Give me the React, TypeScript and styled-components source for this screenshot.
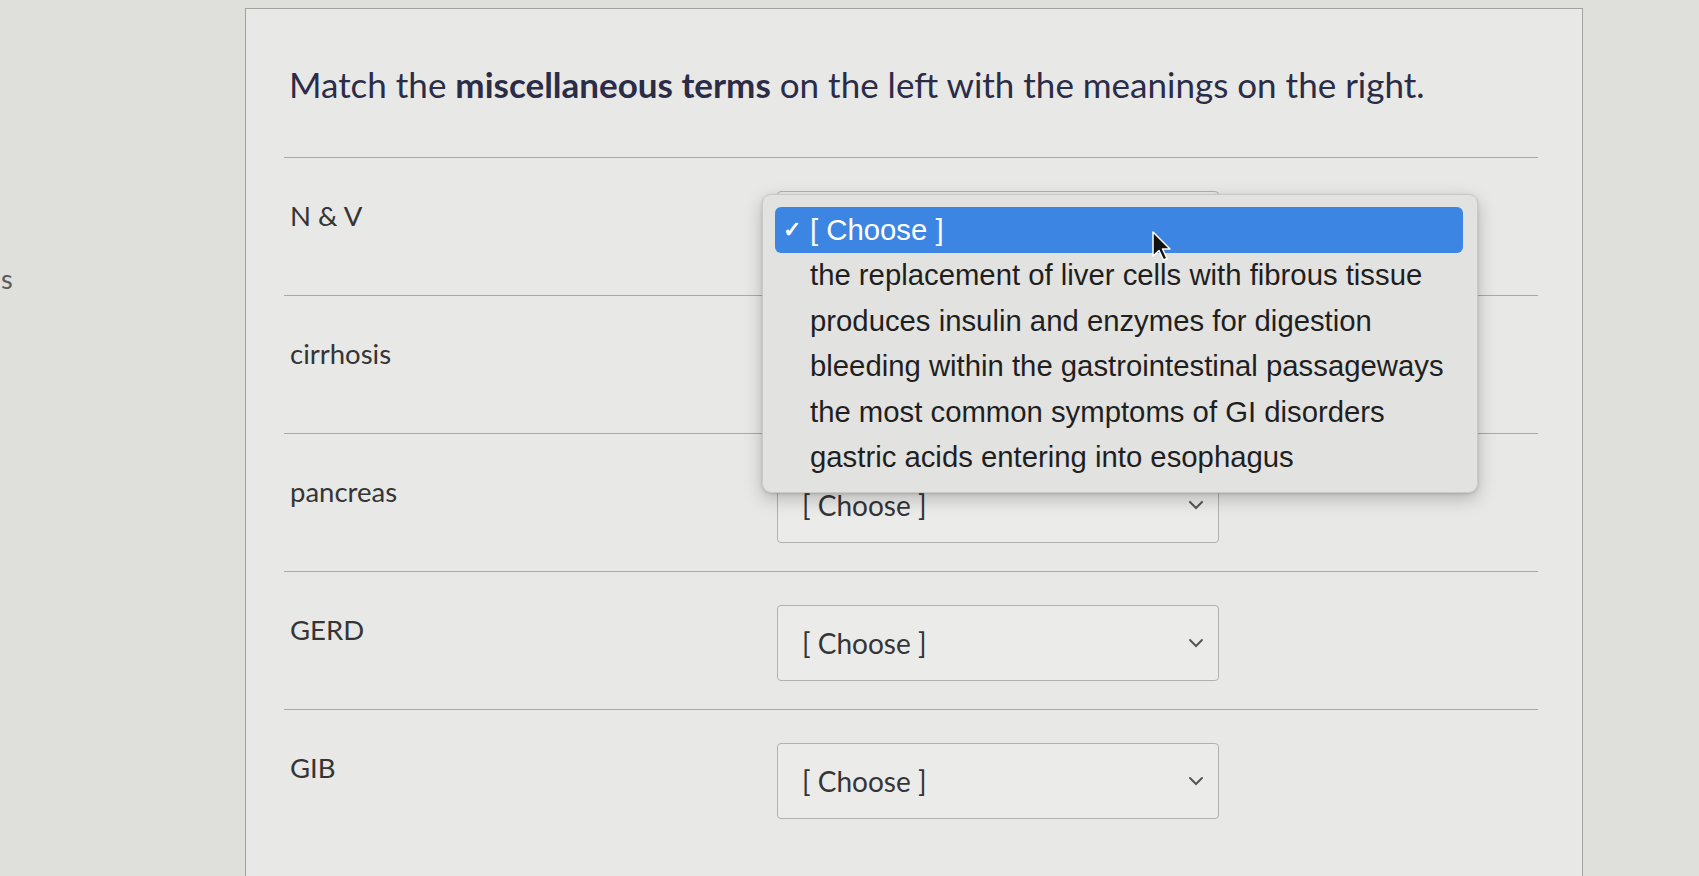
import React from "react";
import styled, { createGlobalStyle } from "styled-components";

const terms = ["N & V", "cirrhosis", "pancreas", "GERD", "GIB"];

const meanings = [
    "the replacement of liver cells with fibrous tissue",
    "produces insulin and enzymes for digestion",
    "bleeding within the gastrointestinal passageways",
    "the most common symptoms of GI disorders",
    "gastric acids entering into esophagus"
];

const GlobalStyle = createGlobalStyle`
    html, body {
        margin: 0;
        padding: 0;
    }
    body {
        width: 1699px;
        height: 876px;
        overflow: hidden;
        background: #dfdfdc;
        font-family: Lato, "Noto Sans", sans-serif;
    }
`;

const Page = styled.div`
    width: 1699px;
    height: 876px;
    display: flex;
    overflow: hidden;
`;

const Gutter = styled.aside<{ $width: number }>`
    width: ${(p) => p.$width}px;
    flex-shrink: 0;
    background: #dfdfdc;
`;

const SideLetter = styled.span`
    display: block;
    padding: 262px 0 0 1px;
    font-size: 27px;
    color: #5a5a5a;
`;

const Card = styled.main`
    position: relative;
    width: 1336px;
    flex-shrink: 0;
    margin-top: 8px;
    background: #e8e8e6;
    border: 1.5px solid #a2a2a0;
    border-bottom: none;
`;

const Title = styled.h1`
    margin: 54px 0 0 43px;
    font-size: 35px;
    line-height: 42px;
    font-weight: 400;
    color: #2b2c48;
    white-space: nowrap;
`;

const Strong = styled.b`
    font-weight: 700;
`;

const List = styled.div`
    margin: 52px 44px 0 38px;
`;

const Row = styled.div`
    height: 138px;
    box-sizing: border-box;
    border-top: 1.5px solid #a9a9a7;
    padding: 33px 0 0 6px;
    display: grid;
    grid-template-columns: 487px 442px;
    align-items: start;
`;

const Term = styled.span`
    margin-top: 9px;
    font-size: 27.5px;
    line-height: 31px;
    color: #353535;
`;

const SelectBox = styled.div`
    height: 76px;
    box-sizing: border-box;
    border: 1.5px solid #b1b1af;
    border-radius: 4px;
    background: #ebebe9;
    padding: 0 14px 0 24px;
    display: flex;
    align-items: center;
    justify-content: space-between;
    font-size: 28px;
    color: #353535;
`;

const Menu = styled.div`
    position: absolute;
    left: 516px;
    top: 185px;
    width: 716px;
    box-sizing: border-box;
    padding: 12px 14px 12px 12px;
    background: #e2e2e0;
    border: 1px solid #c9c9c7;
    border-radius: 9px;
    box-shadow: 0 6px 18px rgba(0, 0, 0, 0.22), 0 1px 3px rgba(0, 0, 0, 0.15);
    font-family: "Liberation Sans", Arial, sans-serif;
`;

const Option = styled.div<{ $active?: boolean }>`
    height: 45.5px;
    display: flex;
    align-items: center;
    border-radius: 6px;
    padding-left: ${(p) => (p.$active ? 8 : 35)}px;
    background: ${(p) => (p.$active ? "#3c85e2" : "transparent")};
    color: ${(p) => (p.$active ? "#ffffff" : "#1f1f1f")};
    font-size: 29.3px;
    white-space: nowrap;
`;

const Check = styled.span`
    width: 27px;
    font-size: 22px;
    font-weight: 700;
`;

const Pointer = styled.svg`
    position: absolute;
    left: 905px;
    top: 222px;
`;

const Chevron = () => (
    <svg width="16" height="10" viewBox="0 0 16 10">
        <path d="M2 2 L8 8 L14 2" fill="none" stroke="#555" strokeWidth="2" strokeLinecap="round" />
    </svg>
);

const App = () => {
    return (
        <>
            <GlobalStyle />
            <Page>
                <Gutter $width={245}>
                    <SideLetter>s</SideLetter>
                </Gutter>
                <Card>
                    <Title>
                        Match the <Strong>miscellaneous terms</Strong> on the left with the meanings on the right.
                    </Title>
                    <List>
                        {terms.map((term) => (
                            <Row key={term}>
                                <Term>{term}</Term>
                                <SelectBox>
                                    <span>[ Choose ]</span>
                                    <Chevron />
                                </SelectBox>
                            </Row>
                        ))}
                    </List>
                    <Menu>
                        <Option $active>
                            <Check>✓</Check>[ Choose ]
                        </Option>
                        {meanings.map((m) => (
                            <Option key={m}>{m}</Option>
                        ))}
                    </Menu>
                    <Pointer width="22" height="32" viewBox="0 0 22 32">
                        <path d="M2 1 L2 25 L8 19.5 L12.5 29 L16 27.5 L11.5 18 L19 18 Z" fill="#111" stroke="#fff" strokeWidth="1.5" strokeLinejoin="round" />
                    </Pointer>
                </Card>
                <Gutter $width={118} />
            </Page>
        </>
    );
};

export default App;
